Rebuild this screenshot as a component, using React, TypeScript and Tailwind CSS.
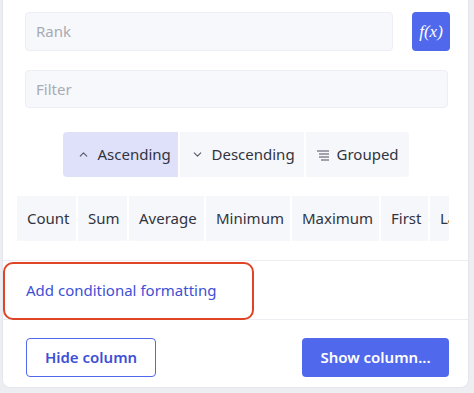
import { ChevronUp, ChevronDown } from "lucide-react";

const AGGREGATES = [
 { name: "Count", w: "w-[59px]" },
 { name: "Sum", w: "w-[49px]" },
 { name: "Average", w: "w-[75px]" },
 { name: "Minimum", w: "w-[84px]" },
 { name: "Maximum", w: "w-[87px]" },
 { name: "First", w: "w-[47px]" },
 { name: "Last", w: "w-[50px]" },
];

function GroupedIcon(): JSX.Element {
 return (
  <svg width="14" height="12" viewBox="0 0 14 12" fill="none" stroke="#4b4f5c" strokeWidth="1.2">
   <path d="M1 2h12M3 5h10M3 8h10M5 11h8" />
  </svg>
 );
}

export default function App() {
 return (
  <div
   className="relative w-[474px] h-[393px] overflow-hidden bg-[#eceef2]"
   style={{ fontFamily: '"Noto Sans", "Open Sans", sans-serif' }}>
   <div className="ml-[2px] w-[467px] h-[388px] bg-white rounded-b-[8px] border-x border-b border-[#e4e6eb] flex flex-col">
    {/* name + formula */}
    <div className="flex items-center pt-[12px] pl-[22px] pr-[18px] gap-[19px]">
     <div className="w-[368px] h-[39px] rounded-[4px] bg-[#f7f8fb] border border-[#eceef3] flex items-center px-[10px] text-[15px] text-[#a8abb4]">
      Rank
     </div>
     <div className="w-[38px] h-[39px] rounded-[4px] bg-[#5068ec] flex items-center justify-center text-white text-[17px] italic" style={{ fontFamily: '"Liberation Serif", serif' }}>
      f(x)
     </div>
    </div>

    {/* filter */}
    <div className="pt-[19px] pl-[22px] pr-[19px]">
     <div className="w-[423px] h-[38px] rounded-[4px] bg-[#f7f8fb] border border-[#eceef3] flex items-center px-[10px] text-[15px] text-[#a8abb4]">
      Filter
     </div>
    </div>

    {/* sort */}
    <div className="flex justify-center pt-[24px]">
     <div className="flex gap-[2px] text-[15px] text-[#30343f]">
      <div className="w-[115px] h-[45px] rounded-l-[4px] bg-[#dfe1fb] flex items-center pl-[14px] gap-[8px]">
       <ChevronUp size={13} strokeWidth={2} color="#555a68" />
       <span>Ascending</span>
      </div>
      <div className="w-[124px] h-[45px] bg-[#f6f7fb] flex items-center pl-[11px] gap-[8px]">
       <ChevronDown size={13} strokeWidth={2} color="#555a68" />
       <span>Descending</span>
      </div>
      <div className="w-[103px] h-[45px] rounded-r-[4px] bg-[#f6f7fb] flex items-center pl-[10px] gap-[7px]">
       <GroupedIcon />
       <span>Grouped</span>
      </div>
     </div>
    </div>

    {/* aggregates */}
    <div className="pt-[19px] pl-[14px] pr-[19px]">
     <div className="w-[432px] overflow-hidden">
      <div className="flex gap-[2px] w-max text-[15px] text-[#30343f]">
       {AGGREGATES.map((a) => (
        <div key={a.name} className={`${a.w} h-[45px] bg-[#f6f7fb] flex items-center pl-[10px]`}>
         {a.name}
        </div>
       ))}
      </div>
     </div>
    </div>

    {/* conditional formatting */}
    <div className="mt-[19px] border-t border-[#eceef2] h-[59px] flex items-center pl-[23px]">
     <span className="text-[15px] text-[#3d4fd6]">Add conditional formatting</span>
    </div>

    {/* footer */}
    <div className="border-t border-[#eceef2] flex justify-between items-center pt-[18px] pl-[23px] pr-[19px]">
     <button className="w-[130px] h-[39px] rounded-[4px] border border-[#5068ec] bg-white text-[#3d4fd6] text-[15px] font-semibold">
      Hide column
     </button>
     <button className="w-[147px] h-[39px] rounded-[4px] bg-[#5068ec] text-white text-[15px] font-semibold">
      Show column...
     </button>
    </div>
   </div>

   {/* highlight */}
   <div className="absolute left-[3px] top-[262px] w-[251px] h-[58px] rounded-[10px] border-2 border-[#df4424]" />
  </div>
 );
}
